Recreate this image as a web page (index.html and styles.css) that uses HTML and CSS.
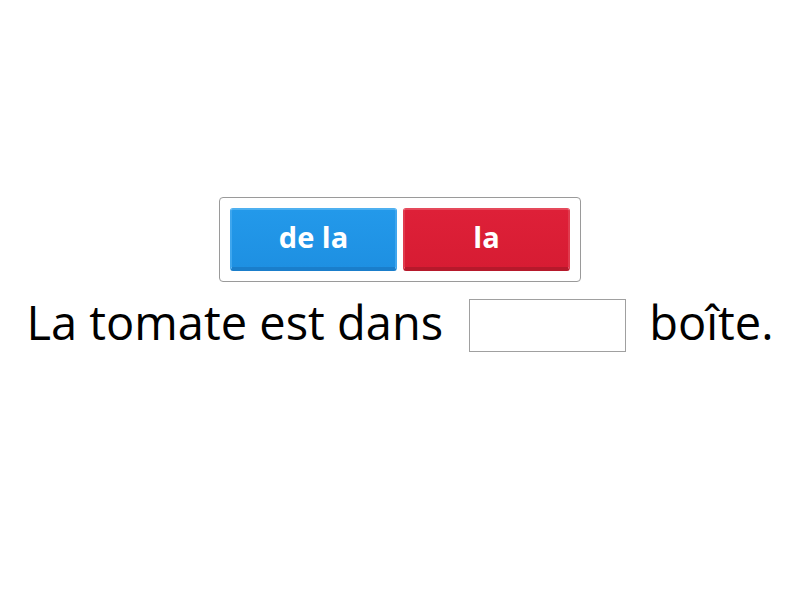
FILE: index.html
```html
<!DOCTYPE html>
<html lang="fr">
<head>
<meta charset="utf-8">
<link rel="stylesheet" href="styles.css">
</head>
<body>
<main class="stage">
  <div class="options">
    <div class="tile tile-blue">de la</div>
    <div class="tile tile-red">la</div>
  </div>
  <p class="sentence"><span>La tomate est dans</span><span class="blank"></span><span>boîte.</span></p>
</main>
</body>
</html>
```
FILE: styles.css
```css
html, body {
  margin: 0;
  padding: 0;
  background: #fff;
}
body {
  width: 800px;
  height: 600px;
  font-family: "Open Sans", "Liberation Sans", sans-serif;
}
.stage {
  display: flex;
  flex-direction: column;
  align-items: center;
  padding-top: 197px;
}
.options {
  display: flex;
  gap: 6px;
  padding: 10px;
  border: 1px solid #9a9a9a;
  border-radius: 4px;
}
.tile {
  width: 167px;
  height: 63px;
  box-sizing: border-box;
  display: flex;
  align-items: center;
  justify-content: center;
  color: #fff;
  font-weight: 700;
  font-size: 29px;
  padding-bottom: 5px;
  border-radius: 3px;
  border-style: solid;
  border-width: 2px 2px 4px 2px;
}
.tile-blue {
  background: linear-gradient(#2399ea, #1e90e2);
  border-color: #4eb0f0 #3ea6ee #1a7ecb #3ea6ee;
}
.tile-red {
  background: linear-gradient(#de2038, #d71c33);
  border-color: #e5495b #e03a4d #b6192b #e03a4d;
}
.sentence {
  margin: 17px 0 0;
  display: flex;
  align-items: center;
  font-size: 47px;
  color: #000;
  line-height: 53px;
}
.sentence span:not(.blank) {
  position: relative;
  top: -3px;
}
.blank {
  width: 157px;
  height: 53px;
  box-sizing: border-box;
  border: 1px solid #a0a0a0;
  margin: 0 23px 0 26px;
}
```
